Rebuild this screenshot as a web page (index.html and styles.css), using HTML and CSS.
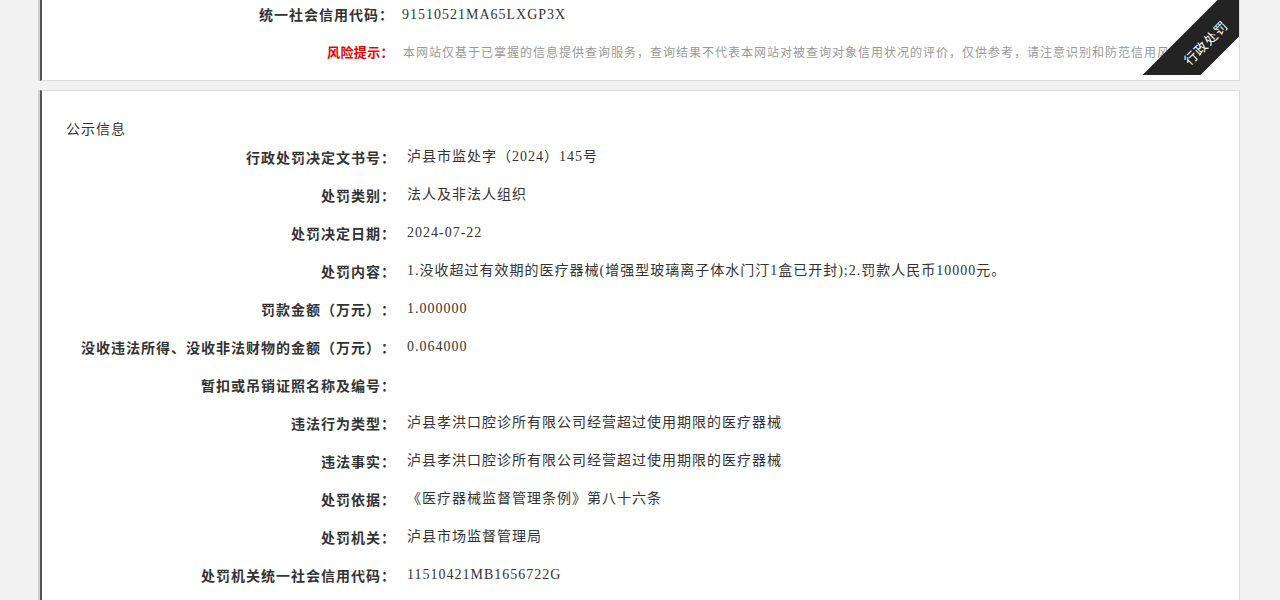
FILE: index.html
```html
<!DOCTYPE html>
<html lang="zh-CN">
<head>
<meta charset="utf-8">
<title>行政处罚</title>
<link rel="stylesheet" href="styles.css">
</head>
<body>
<div class="page">
  <div class="card card-top">
    <div class="row top-row">
      <div class="label">统一社会信用代码：</div>
      <div class="value">91510521MA65LXGP3X</div>
    </div>
    <div class="row top-row">
      <div class="label risk-label">风险提示：</div>
      <div class="value risk-value">本网站仅基于已掌握的信息提供查询服务，查询结果不代表本网站对被查询对象信用状况的评价，仅供参考，请注意识别和防范信用风险。</div>
    </div>
    <div class="ribbon-wrap">
      <div class="ribbon">行政处罚</div>
    </div>
  </div>

  <div class="card card-info">
    <div class="title">公示信息</div>
    <div class="row"><div class="label">行政处罚决定文书号：</div><div class="value">泸县市监处字（2024）145号</div></div>
    <div class="row"><div class="label">处罚类别：</div><div class="value">法人及非法人组织</div></div>
    <div class="row"><div class="label">处罚决定日期：</div><div class="value">2024-07-22</div></div>
    <div class="row"><div class="label">处罚内容：</div><div class="value">1.没收超过有效期的医疗器械(增强型玻璃离子体水门汀1盒已开封);2.罚款人民币10000元。</div></div>
    <div class="row"><div class="label">罚款金额（万元）：</div><div class="value">1.000000</div></div>
    <div class="row"><div class="label">没收违法所得、没收非法财物的金额（万元）：</div><div class="value">0.064000</div></div>
    <div class="row"><div class="label">暂扣或吊销证照名称及编号：</div><div class="value"></div></div>
    <div class="row"><div class="label">违法行为类型：</div><div class="value">泸县孝洪口腔诊所有限公司经营超过使用期限的医疗器械</div></div>
    <div class="row"><div class="label">违法事实：</div><div class="value">泸县孝洪口腔诊所有限公司经营超过使用期限的医疗器械</div></div>
    <div class="row"><div class="label">处罚依据：</div><div class="value">《医疗器械监督管理条例》第八十六条</div></div>
    <div class="row"><div class="label">处罚机关：</div><div class="value">泸县市场监督管理局</div></div>
    <div class="row"><div class="label">处罚机关统一社会信用代码：</div><div class="value">11510421MB1656722G</div></div>
  </div>
</div>
</body>
</html>
```

FILE: styles.css
```css
html, body {
  margin: 0;
  padding: 0;
  background: #f2f2f2;
  overflow: hidden;
}
.page {
  width: 1200px;
  margin: -25px 0 0 40px;
  font-family: "Liberation Serif", "Noto Sans CJK SC", serif;
  color: #333;
  text-spacing-trim: space-all;
}
.card {
  position: relative;
  background: #fff;
  border: 1px solid #dcdcdc;
  border-left: 2px solid #555;
  box-shadow: -2px 0 0 #cfcfcf;
  box-sizing: border-box;
  overflow: hidden;
}
.card-top {
  padding: 20px 0 10px 0;
  margin-bottom: 9px;
}
.card-info {
  padding: 27px 0 60px 24px;
}
.row {
  display: grid;
  grid-template-columns: 330px 1fr;
  line-height: 38px;
  height: 38px;
  font-size: 14px;
  letter-spacing: 1px;
}
.top-row {
  grid-template-columns: 352px 1fr;
  line-height: 37px;
  height: 37px;
}
.label {
  text-align: right;
  font-family: "Noto Sans CJK SC", sans-serif;
  font-weight: bold;
  white-space: nowrap;
  color: #333;
}
.value {
  padding-left: 11px;
  white-space: nowrap;
}
.top-row .value {
  padding-left: 8px;
}
.risk-label {
  color: #e60000;
  font-size: 13px;
  letter-spacing: 0.4px;
}
.top-row .risk-value {
  font-size: 12px;
  color: #999;
  font-family: "Noto Sans CJK SC", sans-serif;
  overflow: hidden;
  padding-left: 9px;
}
.title {
  font-family: "Noto Sans CJK SC", sans-serif;
  font-size: 14px;
  line-height: 20px;
  letter-spacing: 1px;
  color: #333;
}
.ribbon-wrap {
  position: absolute;
  top: 0;
  right: 0;
  bottom: 5px;
  width: 110px;
  overflow: hidden;
}
.ribbon {
  position: absolute;
  left: -22px;
  top: 43px;
  width: 200px;
  height: 41px;
  box-sizing: border-box;
  padding: 3px 6px 0 0;
  line-height: 38px;
  background: #232323;
  color: #fff;
  text-align: center;
  font-family: "Noto Sans CJK SC", sans-serif;
  font-size: 13px;
  letter-spacing: 1px;
  transform: rotate(-45deg);
}
```
